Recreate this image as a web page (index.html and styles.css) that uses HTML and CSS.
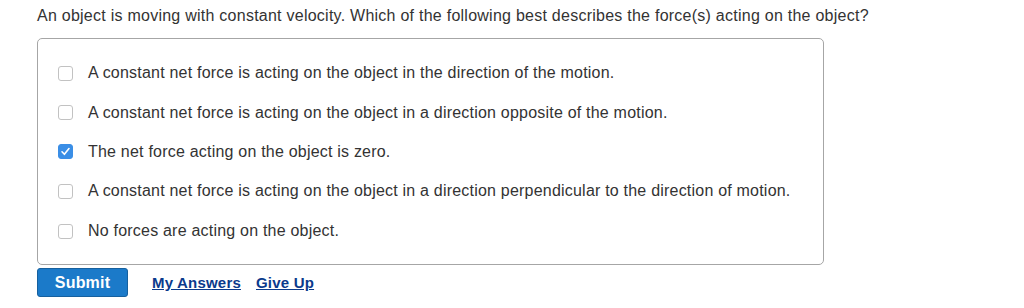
FILE: index.html
```html
<!DOCTYPE html>
<html>
<head>
<meta charset="utf-8">
<link rel="stylesheet" href="styles.css">
</head>
<body>
<div class="page">
  <p class="question">An object is moving with constant velocity. Which of the following best describes the force(s) acting on the object?</p>
  <div class="choices">
    <label class="choice"><span class="box"></span><span class="text">A constant net force is acting on the object in the direction of the motion.</span></label>
    <label class="choice"><span class="box"></span><span class="text">A constant net force is acting on the object in a direction opposite of the motion.</span></label>
    <label class="choice"><span class="box checked"><svg viewBox="0 0 15 15" width="15" height="15"><path d="M4 7.8 L6.4 10.3 L11 4.6" fill="none" stroke="#fff" stroke-width="1.6" stroke-linecap="round" stroke-linejoin="round"/></svg></span><span class="text">The net force acting on the object is zero.</span></label>
    <label class="choice"><span class="box"></span><span class="text">A constant net force is acting on the object in a direction perpendicular to the direction of motion.</span></label>
    <label class="choice"><span class="box"></span><span class="text">No forces are acting on the object.</span></label>
  </div>
  <div class="actions">
    <button class="submit">Submit</button>
    <a class="link" href="#">My Answers</a>
    <a class="link" href="#">Give Up</a>
  </div>
</div>
</body>
</html>
```
FILE: styles.css
```css
html, body {
  margin: 0;
  padding: 0;
  background: #fff;
}
.page {
  padding: 7px 0 0 37px;
  font-family: "Liberation Sans", Arial, Helvetica, sans-serif;
  color: #333;
  font-size: 16px;
  letter-spacing: 0.25px;
}
.question {
  margin: 0;
  line-height: 18px;
  height: 18px;
  white-space: nowrap;
}
.choices {
  margin-top: 13px;
  width: 787px;
  border: 1px solid #a6a6a6;
  border-radius: 5px;
  padding: 14px 0 14px 20px;
  box-sizing: border-box;
  height: 227px;
  letter-spacing: 0.21px;
}
.choice {
  display: flex;
  align-items: center;
  height: 39px;
}
.choice:nth-child(1),
.choice:nth-child(4),
.choice:nth-child(5) {
  height: 40px;
}
.box {
  width: 15px;
  height: 15px;
  box-sizing: border-box;
  border: 1px solid #c2c2c2;
  border-radius: 3px;
  background: #fff;
  flex: none;
  margin-right: 15px;
  display: flex;
}
.box.checked {
  background: #3a8ee6;
  border-color: #3a8ee6;
}
.box.checked svg {
  margin: -1px;
}
.text {
  line-height: 18px;
  white-space: nowrap;
}
.actions {
  display: flex;
  align-items: center;
  margin-top: 3px;
}
.submit {
  width: 91px;
  height: 29px;
  background: #1b7ac9;
  border: 1px solid #16609e;
  border-radius: 3px;
  color: #fff;
  font-family: "Liberation Sans", Arial, Helvetica, sans-serif;
  font-weight: bold;
  font-size: 16px;
  letter-spacing: 0.2px;
  padding: 0;
  margin-right: 24px;
}
.link {
  color: #0b3a8c;
  font-weight: bold;
  font-size: 15px;
  letter-spacing: 0.2px;
  text-decoration: underline;
  margin-right: 15px;
}
```
